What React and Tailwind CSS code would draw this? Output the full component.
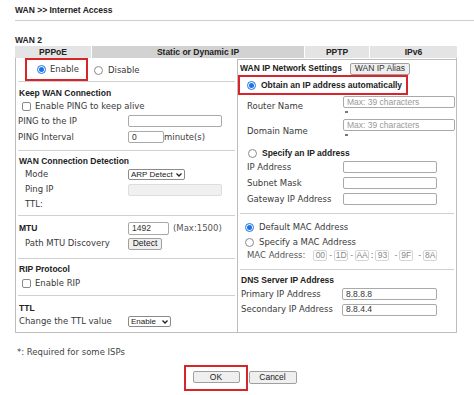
import React from 'react';

const label = "font-['DejaVu_Sans',sans-serif] text-[8.5px] text-[#3a3a3a]";
const bold = "font-['Liberation_Sans',Arial,sans-serif] text-[8.5px] font-bold text-[#222]";
const arial = "font-['Liberation_Sans',Arial,sans-serif] text-[8.5px]";

const Radio = ({ checked }) => (
    <span
        className={`inline-flex items-center justify-center w-[9px] h-[9px] rounded-full border bg-white shrink-0 ${
            checked ? 'border-[#1a73e8]' : 'border-[#8a8a8a]'
        }`}
    >
        {checked && <span className="w-[5px] h-[5px] rounded-full bg-[#1a73e8]" />}
    </span>
);

const Checkbox = () => (
    <span className="inline-block w-[9px] h-[9px] rounded-[2px] border border-[#8a8a8a] bg-white shrink-0" />
);

const Input = ({ w, value, placeholder, disabled, h = 'h-[12px]' }) => (
    <div
        className={`${w} ${h} flex items-center px-[3px] rounded-[2px] border whitespace-nowrap ${arial} ${
            disabled ? 'bg-[#f0f0f0] border-[#dddddd]' : 'bg-white border-[#a9a9a9]'
        }`}
    >
        {value && <span className="text-[#333]">{value}</span>}
        {placeholder && <span className="text-[#9a9a9a]">{placeholder}</span>}
    </div>
);

const Select = ({ w, value, h = 'h-[11px]' }) => (
    <div className={`${w} ${h} flex items-center gap-[2px] whitespace-nowrap pl-[2px] pr-[2px] rounded-[2px] border border-[#8a8a8a] bg-white font-['Liberation_Sans',Arial,sans-serif] text-[8px] text-[#222]`}>
        <span className="flex-1">{value}</span>
        <svg width="6" height="4" viewBox="0 0 6 4" className="shrink-0">
            <path d="M0.5 0.5 L3 3 L5.5 0.5" fill="none" stroke="#222" strokeWidth="1.3" />
        </svg>
    </div>
);

const Button = ({ children, w, h = 'h-[12px]' }) => (
    <div className={`${w} ${h} flex items-center justify-center whitespace-nowrap rounded-[2px] border border-[#a0a0a0] bg-[#efefef] ${arial} text-[#222]`}>
        {children}
    </div>
);

const Row = ({ h, children, className = '' }) => (
    <div className={`flex items-center whitespace-nowrap ${h} ${className}`}>{children}</div>
);

const MacBox = ({ v }) => (
    <span className="w-[14px] h-[11px] flex items-center justify-center rounded-[2px] border border-[#d6d6d6] text-[#888]">{v}</span>
);

export default function App() {
    return (
        <div className="w-[474px] h-[395px] bg-white overflow-hidden pl-[15px]">
            {/* title */}
            <div className={`h-[21px] flex items-center border-b border-[#cfcfcf] ${bold}`}>WAN &gt;&gt; Internet Access</div>
            <div className={`mt-[13px] h-[12px] flex items-center ${bold}`}>WAN 2</div>

            {/* tabs */}
            <div className={`flex gap-[1px] w-[442px] h-[12px] ${bold}`}>
                <div className="w-[76px] bg-[#e4e4e4] flex items-center justify-center">PPPoE</div>
                <div className="w-[212px] bg-[#d2d2d2] flex items-center justify-center">Static or Dynamic IP</div>
                <div className="w-[64px] bg-[#e4e4e4] flex items-center justify-center">PPTP</div>
                <div className="flex-1 bg-[#e4e4e4] flex items-center justify-center">IPv6</div>
            </div>

            {/* panel */}
            <div className="w-[442px] h-[275px] grid grid-cols-[221px_1fr] border-x border-b border-[#bdbdbd]">
                {/* left column */}
                <div className="flex flex-col pt-[1px]">
                    <div className="h-[23px] flex items-center border-b border-[#d0d0d0] mx-[2px]">
                        <div className="ml-[7px] mt-[-2px] w-[63px] h-[23px] border-2 border-[#d9242b] flex items-center pl-[10px] gap-[4px]">
                            <Radio checked />
                            <span className={label}>Enable</span>
                        </div>
                        <div className="ml-[6px] flex items-center gap-[5px]">
                            <Radio />
                            <span className={label}>Disable</span>
                        </div>
                    </div>

                    <div className="pt-[5px] pb-[5px] border-b border-[#d0d0d0] mx-[2px]">
                        <Row h="h-[13px]" className={`pl-[1px] ${bold}`}>Keep WAN Connection</Row>
                        <Row h="h-[13px]" className="pl-[4px] gap-[4px]">
                            <Checkbox />
                            <span className={label}>Enable PING to keep alive</span>
                        </Row>
                        <Row h="h-[16px]">
                            <span className={`w-[110px] ${label}`}>PING to the IP</span>
                            <Input w="w-[94px]" />
                        </Row>
                        <Row h="h-[16px]">
                            <span className={`w-[110px] ${label}`}>PING Interval</span>
                            <Input w="w-[36px]" value="0" />
                            <span className={label}>minute(s)</span>
                        </Row>
                    </div>

                    <div className="pt-[4px] pb-[3px] border-b border-[#d0d0d0] mx-[2px]">
                        <Row h="h-[12px]" className={`pl-[1px] ${bold}`}>WAN Connection Detection</Row>
                        <Row h="h-[15px]">
                            <span className={`w-[110px] pl-[7px] ${label}`}>Mode</span>
                            <Select w="w-[57px]" value="ARP Detect" />
                        </Row>
                        <Row h="h-[15px]">
                            <span className={`w-[110px] pl-[7px] ${label}`}>Ping IP</span>
                            <Input w="w-[94px]" disabled />
                        </Row>
                        <Row h="h-[15px]" className={`pl-[7px] ${label}`}>TTL:</Row>
                    </div>

                    <div className="pt-[5px] pb-[7px] border-b border-[#d0d0d0] mx-[2px]">
                        <Row h="h-[15px]">
                            <span className={`w-[110px] pl-[1px] ${bold}`}>MTU</span>
                            <Input w="w-[41px]" h="h-[13px]" value="1492" />
                            <span className={`ml-[4px] ${label} text-[#555]`}>(Max:1500)</span>
                        </Row>
                        <Row h="h-[15px]">
                            <span className={`w-[110px] pl-[7px] ${label}`}>Path MTU Discovery</span>
                            <Button w="w-[34px]">Detect</Button>
                        </Row>
                    </div>

                    <div className="pt-[3px] pb-[4px] border-b border-[#d0d0d0] mx-[2px]">
                        <Row h="h-[14px]" className={`pl-[1px] ${bold}`}>RIP Protocol</Row>
                        <Row h="h-[15px]" className="pl-[4px] gap-[4px]">
                            <Checkbox />
                            <span className={label}>Enable RIP</span>
                        </Row>
                    </div>

                    <div className="pt-[5px] mx-[2px]">
                        <Row h="h-[14px]" className={`pl-[1px] ${bold}`}>TTL</Row>
                        <Row h="h-[13px]">
                            <span className={`w-[110px] pl-[1px] ${label}`}>Change the TTL value</span>
                            <Select w="w-[43px]" value="Enable" />
                        </Row>
                    </div>
                </div>

                {/* right column */}
                <div className="flex flex-col border-l border-t border-[#bdbdbd] mt-[1px]">
                    <div className="h-[15px] pt-[2px] flex items-center pl-[2px] gap-[8px]">
                        <span className={bold}>WAN IP Network Settings</span>
                        <Button w="w-[60px]" h="h-[12px]">
                            <span className="text-[#333]">WAN IP Alias</span>
                        </Button>
                    </div>
                    <div className="h-[20px] w-[170px] border-2 border-[#d9242b] flex items-center pl-[7px] gap-[5px]">
                        <Radio checked />
                        <span className={bold}>Obtain an IP address automatically</span>
                    </div>

                    <div className="h-[23px] flex">
                        <span className={`w-[105px] pl-[9px] flex items-center ${label}`}>Router Name</span>
                        <div className="flex flex-col pt-[1px]">
                            <Input w="w-[112px]" placeholder="Max: 39 characters" />
                            <span className="ml-[2px] mt-[3px] w-[3px] h-[2px] bg-[#777]" />
                        </div>
                    </div>
                    <div className="h-[23px] flex">
                        <span className={`w-[105px] pl-[9px] pt-[4px] flex items-center ${label}`}>Domain Name</span>
                        <div className="flex flex-col pt-[1px]">
                            <Input w="w-[112px]" placeholder="Max: 39 characters" />
                            <span className="ml-[2px] mt-[3px] w-[3px] h-[2px] bg-[#777]" />
                        </div>
                    </div>

                    <div className="mx-[2px] pb-[6px] border-b border-[#d0d0d0]">
                        <div className="h-[18px] pt-[6px] flex items-center pl-[8px] gap-[5px]">
                            <Radio />
                            <span className={bold}>Specify an IP address</span>
                        </div>
                        <Row h="h-[16px]">
                            <span className={`w-[103px] pl-[7px] ${label}`}>IP Address</span>
                            <Input w="w-[94px]" />
                        </Row>
                        <Row h="h-[16px]">
                            <span className={`w-[103px] pl-[7px] ${label}`}>Subnet Mask</span>
                            <Input w="w-[94px]" />
                        </Row>
                        <Row h="h-[16px]">
                            <span className={`w-[103px] pl-[7px] ${label}`}>Gateway IP Address</span>
                            <Input w="w-[94px]" />
                        </Row>
                    </div>

                    <div className="mx-[2px] pt-[6px] pb-[7px] border-b border-[#d0d0d0]">
                        <Row h="h-[15px]" className="pl-[5px] gap-[5px]">
                            <Radio checked />
                            <span className={label}>Default MAC Address</span>
                        </Row>
                        <Row h="h-[14px]" className="pl-[5px] gap-[5px]">
                            <Radio />
                            <span className={label}>Specify a MAC Address</span>
                        </Row>
                        <Row h="h-[13px]" className={`pl-[7px] ${label} gap-[3px]`}>
                            <span className="text-[#555] mr-[5px]">MAC Address:</span>
                            <span className={`flex items-center gap-[2px] ${arial}`}>
                                <MacBox v="00" />
                                <span className="text-[#888]">-</span>
                                <MacBox v="1D" />
                                <span className="text-[#888]">-</span>
                                <MacBox v="AA" />
                                <span className="text-[#555]">:</span>
                                <MacBox v="93" />
                                <span className="text-[#888] ml-[3px]">-</span>
                                <MacBox v="9F" />
                                <span className="text-[#888] ml-[3px]">-</span>
                                <MacBox v="8A" />
                            </span>
                        </Row>
                    </div>

                    <div className="mx-[2px] pt-[4px]">
                        <Row h="h-[12px]" className={`pl-[1px] ${bold}`}>DNS Server IP Address</Row>
                        <Row h="h-[16px]">
                            <span className={`w-[102px] pl-[1px] ${label}`}>Primary IP Address</span>
                            <Input w="w-[95px]" value="8.8.8.8" />
                        </Row>
                        <Row h="h-[15px]">
                            <span className={`w-[102px] pl-[1px] ${label}`}>Secondary IP Address</span>
                            <Input w="w-[95px]" value="8.8.4.4" />
                        </Row>
                    </div>
                </div>
            </div>

            {/* footer */}
            <div className={`mt-[13px] h-[12px] flex items-center pl-[2px] ${label} text-[#444]`}>*: Required for some ISPs</div>
            <div className="mt-[13px] w-[459px] flex justify-center gap-[9px]">
                <div className="relative">
                    <Button w="w-[47px]" h="h-[12px]">OK</Button>
                    <div className="absolute -left-[9px] -right-[8px] -top-[6px] -bottom-[7px] border-2 border-[#d9242b]" />
                </div>
                <Button w="w-[48px]" h="h-[13px]">Cancel</Button>
            </div>
        </div>
    );
}
